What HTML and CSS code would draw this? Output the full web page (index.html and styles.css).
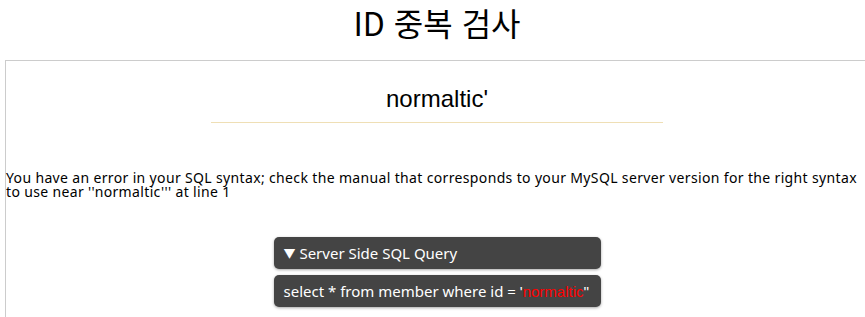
FILE: index.html
```html
<!DOCTYPE html>
<html lang="ko">
<head>
  <meta charset="UTF-8" />
  <title>ID 중복 검사</title>
  <link rel="stylesheet" href="styles.css">
</head>
<body>
  <div class="page">
    <h1 class="title">ID 중복 검사</h1>
    <div class="result-box">
      <h2 class="user-id">normaltic'</h2>
      <hr class="divider">
      <p class="error-msg">You have an error in your SQL syntax; check the manual that corresponds to your MySQL server version for the right syntax to use near ''normaltic''' at line 1</p>
      <div class="query-panel">
        <div class="query-head"><span class="arrow">&#9660;</span> Server Side SQL Query</div>
        <div class="query-body">select * from member where id = <span class="quote">'</span><span class="query-input">normaltic</span><span class="quote">''</span></div>
      </div>
    </div>
  </div>
</body>
</html>
```

FILE: styles.css
```css
html, body {
  margin: 0;
  overflow: hidden;
  background-color: #fff;
}
.page {
  width: 864px;
  margin-left: 5px;
  padding-top: 1px;
  font-family: "Noto Sans", "Noto Sans CJK KR", sans-serif;
  color: #000;
}
.title {
  margin: 0;
  line-height: 42px;
  font-size: 32px;
  font-weight: normal;
  text-align: center;
  font-family: "Noto Sans CJK KR", sans-serif;
}
.result-box {
  margin-top: 17px;
  border: 1px solid #ccc;
  height: 400px;
}
.user-id {
  margin: 24px 0 0;
  font-family: "Liberation Sans", Arial, sans-serif;
  font-size: 24px;
  line-height: 28px;
  font-weight: normal;
  text-align: center;
}
.divider {
  width: 452px;
  margin: 9px auto 0;
  border: 0;
  border-top: 1px solid #efdfb5;
}
.error-msg {
  margin: 48px 0 0;
  font-size: 14px;
  line-height: 14px;
  letter-spacing: 0.35px;
}
.query-panel {
  width: 327px;
  margin: 38px auto 0;
  display: flex;
  flex-direction: column;
  gap: 6px;
}
.query-head,
.query-body {
  background-color: #444;
  color: #fff;
  font-size: 15px;
  height: 32px;
  line-height: 32px;
  padding: 0 10px;
  border-radius: 5px;
  box-shadow: 0 1px 3px rgba(0, 0, 0, 0.35);
}
.arrow {
  font-size: 12px;
  vertical-align: 1px;
}
.quote,
.query-input {
  font-family: "Liberation Sans", Arial, sans-serif;
}
.query-input {
  color: #f00;
}
```
